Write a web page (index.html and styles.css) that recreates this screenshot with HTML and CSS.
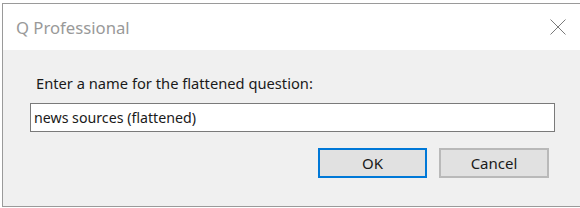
FILE: index.html
```html
<!DOCTYPE html>
<html lang="en">
<head>
    <meta charset="UTF-8">
    <title>Q Professional</title>
    <link rel="stylesheet" href="styles.css">
</head>
<body>

<div class="window">
    <div class="titlebar">
        <span class="title">Q Professional</span>
        <svg class="close" width="16" height="16" viewBox="0 0 16 16">
            <path d="M0.5 0.5 L15.5 15.5 M15.5 0.5 L0.5 15.5" stroke="#7a7a7a" stroke-width="1" fill="none"/>
        </svg>
    </div>
    <div class="content">
        <label class="prompt" for="nameInput">Enter a name for the flattened question:</label>
        <input id="nameInput" class="name-input" type="text" value="news sources (flattened)">
        <div class="buttons">
            <button class="btn btn-default">OK</button>
            <button class="btn">Cancel</button>
        </div>
    </div>
</div>

</body>
</html>
```
FILE: styles.css
```css
body {
    margin: 0;
    padding: 0;
    background-color: #ffffff;
    font-family: 'Noto Sans', 'Open Sans', sans-serif;
}
.window {
    margin: 3px 0 0 2px;
    width: 600px;
    height: 202px;
    border: 1px solid #9a9a9a;
    border-right: none;
    display: flex;
    flex-direction: column;
}
.titlebar {
    height: 46px;
    background-color: #ffffff;
    display: flex;
    align-items: center;
    padding-left: 13px;
    position: relative;
}
.title {
    font-size: 16.7px;
    color: #999999;
}
.close {
    position: absolute;
    left: 547px;
    top: 15px;
}
.content {
    flex: 1;
    background-color: #f0f0f0;
    padding: 23px 0 0 27px;
    display: flex;
    flex-direction: column;
    align-items: flex-start;
}
.prompt {
    margin-left: 6px;
    font-size: 14.7px;
    line-height: 20px;
    color: #1a1a1a;
}
.name-input {
    box-sizing: border-box;
    margin-top: 10px;
    width: 525px;
    height: 29px;
    border: 1px solid #7a7a7a;
    background: #ffffff;
    padding: 0 3px;
    font-family: inherit;
    font-size: 14.2px;
    color: #1a1a1a;
    outline: none;
}
.buttons {
    margin-top: 16px;
    width: 519px;
    display: flex;
    justify-content: flex-end;
    gap: 12px;
}
.btn {
    box-sizing: border-box;
    width: 110px;
    height: 30px;
    background-color: #e1e1e1;
    border: 2px solid #b9b9b9;
    font-family: inherit;
    font-size: 15px;
    color: #1a1a1a;
    padding: 0;
}
.btn-default {
    width: 109px;
    border-color: #0078d7;
}
```
